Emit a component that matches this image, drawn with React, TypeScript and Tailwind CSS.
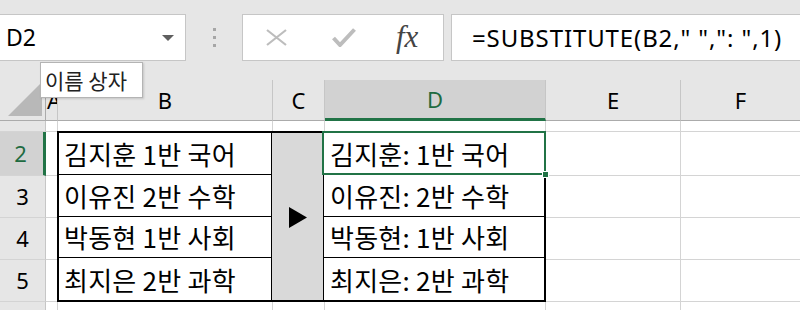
const rows = [
  ['김지훈 1반 국어', '김지훈: 1반 국어'],
  ['이유진 2반 수학', '이유진: 2반 수학'],
  ['박동현 1반 사회', '박동현: 1반 사회'],
  ['최지은 2반 과학', '최지은: 2반 과학'],
];

const headFont = "font-['Noto_Sans','Open_Sans',sans-serif]";
const cellFont = "font-['Noto_Sans_CJK_KR','Noto_Sans',sans-serif]";

const App = () => {
  return (
    <div className={`relative w-[800px] h-[310px] overflow-hidden bg-[#e6e6e6] text-black ${headFont}`}>
      {/* Formula bar */}
      <div className="h-[80px] flex items-start pt-[14px]">
        <div className="-ml-px w-[187px] h-[47px] bg-white border border-[#c6c6c6] flex items-center justify-between pl-[6px] pr-[11px]">
          <span className="text-[23px] leading-none">D2</span>
          <svg width="12" height="6" viewBox="0 0 12 6">
            <polygon points="0,0 12,0 6,6" fill="#5f5f5f" />
          </svg>
        </div>
        <div className="w-[56px] h-[47px] flex flex-col items-center justify-center gap-[5px] pl-[1px]">
          <div className="w-[3px] h-[3px] bg-[#a6a6a6]" />
          <div className="w-[3px] h-[3px] bg-[#a6a6a6]" />
          <div className="w-[3px] h-[3px] bg-[#a6a6a6]" />
        </div>
        <div className="w-[202px] h-[47px] bg-white border border-[#c6c6c6] flex items-center">
          <svg className="ml-[23px]" width="21" height="17" viewBox="0 0 21 17">
            <path d="M1 1 L20 16 M20 1 L1 16" stroke="#bdbdbd" strokeWidth="2.2" fill="none" />
          </svg>
          <svg className="ml-[45px]" width="24" height="19" viewBox="0 0 24 19">
            <path d="M1.5 10 L8 17 L22.5 1.5" stroke="#bdbdbd" strokeWidth="4" fill="none" />
          </svg>
          <span className="ml-[40px] -mt-[2px] text-[31px] italic leading-none text-[#444] font-['Liberation_Serif','DejaVu_Serif',serif]">fx</span>
        </div>
        <div className="ml-[7px] flex-1 h-[47px] bg-white border border-[#c6c6c6] border-r-0 flex items-center pl-[20px]">
          <span className="text-[24px] leading-none tracking-[0.037em]">=SUBSTITUTE(B2," ",": ",1)</span>
        </div>
      </div>

      {/* Sheet */}
      <div className="grid grid-cols-[46px_12px_215px_52px_221px_135px_1fr] grid-rows-[41px_11px_44px_42px_42px_42px_1fr] h-[230px] bg-white">
        {/* header row */}
        <div className="bg-[#e6e6e6] border-b border-r border-[#ababab] flex items-end justify-end pr-[3px] pb-[4px]">
          <svg width="34" height="34" viewBox="0 0 34 34">
            <polygon points="0,34 34,34 34,0" fill="#b8b8b8" />
          </svg>
        </div>
        <div className="bg-[#e6e6e6] border-b border-r border-b-[#ababab] border-r-[#c6c6c6] overflow-hidden flex items-center text-[22px] pl-[1px]">A</div>
        <div className="bg-[#e6e6e6] border-b border-r border-b-[#ababab] border-r-[#c6c6c6] flex items-center justify-center text-[22px]">B</div>
        <div className="bg-[#e6e6e6] border-b border-r border-b-[#ababab] border-r-[#c6c6c6] flex items-center justify-center text-[22px]">C</div>
        <div className="bg-[#d2d2d2] border-b-[3px] border-r border-b-[#217346] border-r-[#c6c6c6] flex items-center justify-center text-[22px] text-[#1e6b41]">D</div>
        <div className="bg-[#e6e6e6] border-b border-r border-b-[#ababab] border-r-[#c6c6c6] flex items-center justify-center text-[22px]">E</div>
        <div className="bg-[#e6e6e6] border-b border-b-[#ababab] flex items-center justify-center text-[22px]">F</div>

        {/* row 1 */}
        <div className="bg-[#e6e6e6] border-b border-r border-b-[#d4d4d4] border-r-[#c6c6c6]" />
        <div className="border-b border-r border-[#d4d4d4]" />
        <div className="border-b border-r border-[#d4d4d4]" />
        <div className="border-b border-r border-[#d4d4d4]" />
        <div className="border-b border-r border-[#d4d4d4]" />
        <div className="border-b border-r border-[#d4d4d4]" />
        <div className="border-b border-[#d4d4d4]" />

        {/* rows 2-5: headers and A column */}
        {[2, 3, 4, 5].map((n, i) => (
          <div
            key={`h${n}`}
            style={{ gridRow: i + 3, gridColumn: 1 }}
            className={
              n === 2
                ? 'bg-[#d2d2d2] border-b border-r-[3px] border-b-[#d4d4d4] border-r-[#217346] flex items-center justify-center text-[22px] text-[#1e6b41] pr-[2px]'
                : 'bg-[#e6e6e6] border-b border-r border-b-[#d4d4d4] border-r-[#c6c6c6] flex items-center justify-center text-[22px]'
            }
          >
            {n}
          </div>
        ))}
        {[3, 4, 5, 6].map((r) => (
          <div key={`a${r}`} style={{ gridRow: r, gridColumn: 2 }} className="border-b border-r border-[#d4d4d4]" />
        ))}

        {/* table B2:D5 */}
        <div className={`col-start-3 col-span-3 row-start-3 row-span-4 -ml-px -mt-px border-2 border-black flex ${cellFont}`}>
          <div className="w-[213px] border-r border-black grid grid-rows-[42px_1fr_1fr_1fr]">
            {rows.map(([b], i) => (
              <div
                key={b}
                className={`flex items-center pl-[5px] pt-[1px] text-[26px] leading-none tracking-[0.01em] ${i < 3 ? 'border-b border-black' : ''}`}
              >
                {b}
              </div>
            ))}
          </div>
          <div className="w-[52px] border-r border-black bg-[#d9d9d9] flex items-center justify-center pt-[2px]">
            <svg width="18" height="21" viewBox="0 0 18 21">
              <polygon points="0,0 18,10.5 0,21" fill="#000" />
            </svg>
          </div>
          <div className="flex-1 grid grid-rows-[42px_1fr_1fr_1fr]">
            {rows.map(([, d], i) => (
              <div
                key={d}
                className={`relative flex items-center pl-[6px] pt-[1px] text-[26px] leading-none tracking-[0.01em] ${i < 3 ? 'border-b border-black' : ''}`}
              >
                {d}
                {i === 0 && (
                  <>
                    <div className="absolute -left-[2px] -top-[2px] -right-[2px] -bottom-[1px] border-[2.5px] border-[#217346]" />
                    <div className="absolute -right-[5px] -bottom-[4px] w-[7px] h-[7px] bg-[#217346] border border-white" />
                  </>
                )}
              </div>
            ))}
          </div>
        </div>

        {/* E and F columns */}
        {[3, 4, 5, 6].map((r) => (
          <div key={`e${r}`} style={{ gridRow: r, gridColumn: 6 }} className="border-b border-r border-[#d4d4d4]" />
        ))}
        {[3, 4, 5, 6].map((r) => (
          <div key={`f${r}`} style={{ gridRow: r, gridColumn: 7 }} className="border-b border-[#d4d4d4]" />
        ))}

        {/* row 6 */}
        <div style={{ gridRow: 7, gridColumn: 1 }} className="bg-[#e6e6e6] border-r border-[#c6c6c6]" />
        <div style={{ gridRow: 7, gridColumn: 2 }} className="border-r border-[#d4d4d4]" />
        <div style={{ gridRow: 7, gridColumn: 3 }} className="border-r border-[#d4d4d4]" />
        <div style={{ gridRow: 7, gridColumn: 4 }} className="border-r border-[#d4d4d4]" />
        <div style={{ gridRow: 7, gridColumn: 5 }} className="border-r border-[#d4d4d4]" />
        <div style={{ gridRow: 7, gridColumn: 6 }} className="border-r border-[#d4d4d4]" />
      </div>

      {/* tooltip */}
      <div className={`absolute left-[40px] top-[62px] w-[103px] h-[36px] bg-white border border-[#b4b4b4] shadow-[1px_1px_2px_rgba(0,0,0,0.15)] flex items-center pl-[4px] text-[21px] leading-none text-[#222] ${cellFont}`}>
        이름 상자
      </div>
    </div>
  );
};

export default App;
